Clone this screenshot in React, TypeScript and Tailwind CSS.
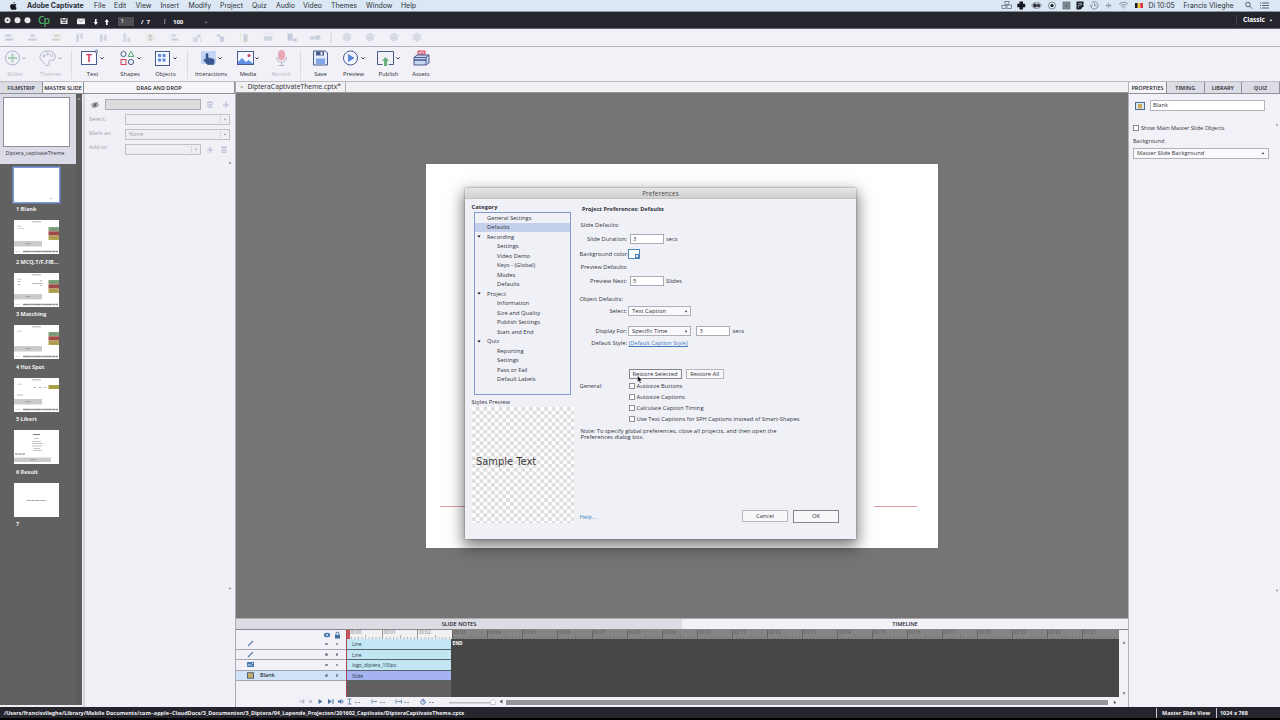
import type { ReactNode } from "react";

const menus = [
  ["File", "w-[20px]"],
  ["Edit", "w-[21.5px]"],
  ["View", "w-[25px]"],
  ["Insert", "w-[28px]"],
  ["Modify", "w-[31.5px]"],
  ["Project", "w-[32px]"],
  ["Quiz", "w-[24px]"],
  ["Audio", "w-[27px]"],
  ["Video", "w-[28px]"],
  ["Themes", "w-[35px]"],
  ["Window", "w-[35px]"],
  ["Help", "w-[30px]"],
];

const tree = [
  { label: "General Settings", level: 0 },
  { label: "Defaults", level: 0, active: true },
  { label: "Recording", level: 0, open: true },
  { label: "Settings", level: 1 },
  { label: "Video Demo", level: 1 },
  { label: "Keys - (Global)", level: 1 },
  { label: "Modes", level: 1 },
  { label: "Defaults", level: 1 },
  { label: "Project", level: 0, open: true },
  { label: "Information", level: 1 },
  { label: "Size and Quality", level: 1 },
  { label: "Publish Settings", level: 1 },
  { label: "Start and End", level: 1 },
  { label: "Quiz", level: 0, open: true },
  { label: "Reporting", level: 1 },
  { label: "Settings", level: 1 },
  { label: "Pass or Fail", level: 1 },
  { label: "Default Labels", level: 1 },
];

const slides = ["1 Blank", "2 MCQ,T/F,FIB...", "3 Matching", "4 Hot Spot", "5 Likert", "6 Result", "7"];

const seconds = Array.from({ length: 22 }, (_, i) => `00:${String(i).padStart(2, "0")}`);

function Caret({ className = "" }: { className?: string }) {
  return (
    <svg width="4" height="3" viewBox="0 0 4 3" className={`shrink-0 ${className}`}>
      <path d="M0 0h4L2 3z" fill="currentColor" />
    </svg>
  );
}

function AppleLogo() {
  return (
    <svg width="7" height="8" viewBox="0 0 14 16" fill="#10141c">
      <path d="M9.7 0C9.8 1.7 8.4 3.4 6.8 3.4 6.6 1.7 8.2 0.2 9.7 0zM12.9 5.4C11.7 6.1 11.1 7 11.1 8.3c0 1.6 1 2.7 2.4 3.2-.6 1.8-2 4.2-3.5 4.2-1 0-1.5-.6-2.7-.6s-1.7.6-2.7.6C2.4 15.7.3 12 .3 8.8.3 5.9 2.2 4.1 4.2 4.1c1.2 0 2.2.8 3 .8.7 0 1.9-.9 3.3-.9 1 0 1.9.5 2.4 1.4z" />
    </svg>
  );
}

function TrayIcons() {
  return (
    <svg width="145" height="12" viewBox="0 0 145 12" fill="none" stroke="#4b5460" strokeWidth="0.6">
      <rect x="4" y="1.5" width="4" height="3" />
      <rect x="1" y="5.5" width="4" height="3" />
      <rect x="6" y="5" width="4.5" height="3.5" />
      <path d="M18.500 1.500h3.500v2.200h2.200v3.600h-2.200v2.200h-3.500v-2.200h-2.200v-3.600h2.200z" fill="#14181f" stroke="none" />
      <ellipse cx="35.5" cy="5.5" rx="4.5" ry="2.8" />
      <circle cx="34" cy="5.5" r="1.8" fill="#222" />
      <circle cx="37.5" cy="5.5" r="1.5" fill="#222" />
      <circle cx="51" cy="5.5" r="3.5" />
      <circle cx="51" cy="5.5" r="1.6" fill="#14181f" stroke="none" />
      <rect x="62" y="2" width="7" height="7" fill="#8b939e" />
      <path d="M64 3.5v4M65.5 3.5v4M67 3.5v4" />
      <path d="M75.5 1.5h7v5l-3 3h-4z" fill="#1d222b" stroke="none" />
      <path d="M77.5 3.5h3v1.5h-3v2.5M81 7.5h2" stroke="#dbe7f3" />
      <path d="M90.5 3a3.7 3.7 0 1 1-.8 3M93.5 3v2.7h2M89.3 4.5l.8 1.8 1.600-1.200" />
      <path d="M104.5 5.5h6M106 4v3M109 4v3M107.5 2.5v6" stroke="#7c8590" />
      <path d="M118 4.3a6 6 0 0 1 9 0M119.5 5.9a4 4 0 0 1 6 0M121 7.4a2 2 0 0 1 3 0M122.5 8.7v.4" />
      <path d="M134 3h2.7v5H134z" fill="#1b1b1b" stroke="none" />
      <path d="M136.7 3h2.6v5h-2.6z" fill="#f2c834" stroke="none" />
      <path d="M139.3 3h2.7v5h-2.7z" fill="#d9333f" stroke="none" />
    </svg>
  );
}

function MenuBar() {
  return (
    <div className="flex h-[12px] items-center border-b border-[#8b9299] bg-[#dbe7f3] pl-[10px] font-['Inter',sans-serif] text-[6.9px] leading-[11px] text-[#2b3038]">
      <div className="w-[17px]">
        <AppleLogo />
      </div>
      <span className="w-[67px] text-[7px] font-bold tracking-[-0.03px]">Adobe Captivate</span>
      {menus.map(([label, width]) => (
        <span key={label} className={`shrink-0 ${width}`}>
          {label}
        </span>
      ))}
      <div className="ml-auto flex items-center pr-[10px]">
        <TrayIcons />
        <span className="ml-[3px] w-[35px]">Di 10:05</span>
        <span className="w-[60.5px]">Francis Vlieghe</span>
        <svg width="26" height="9" viewBox="0 0 26 9" fill="none" stroke="#39414d" strokeWidth="0.8">
          <circle cx="4" cy="3.5" r="2.3" />
          <path d="M5.7 5.2 8 7.700M16 2h1M18 2h7M16 4.500h1M18 4.500h7M16 7h1M18 7h7" />
        </svg>
      </div>
    </div>
  );
}

function TitleBar() {
  return (
    <div className="flex h-[17px] items-center border-b border-[#66656d] bg-[#25252d] font-['Open_Sans',sans-serif] text-[6px] font-bold text-white">
      <svg width="112" height="16" viewBox="0 0 112 16" className="shrink-0">
        <g fill="#e6e6e8">
          <circle cx="7.5" cy="8.3" r="3" />
          <circle cx="17.5" cy="8.3" r="3" />
          <circle cx="27.5" cy="8.3" r="3" />
        </g>
        <circle cx="7.5" cy="8.3" r="1" fill="#4b4b50" />
        <text x="38" y="11.5" fill="#4fa661" fontSize="10.5" fontWeight="600" fontFamily="Open Sans" textLength="12">
          Cp
        </text>
        <path d="M60.5 6h7v6h-7z" fill="#e2e2e5" />
        <path d="M62 6.200v2h4v-2M62.500 10.200h3.500" stroke="#25252d" fill="none" />
        <path d="M77 6.5h8v5.7h-8z" fill="#f0f0f2" />
        <path d="M77 6.700l4 3 4-3" stroke="#777" strokeWidth=".7" fill="none" />
        <path d="M95 7h1.6v3H98l-2.2 3-2.200-3H95zM106 13h1.600v-3h1.400l-2.200-3-2.200 3h1.400z" fill="#fff" />
      </svg>
      <div className="mt-[3px] ml-[5.5px] h-[9px] w-[16.5px] bg-[#4e4e53] pl-[3px] leading-[9px] font-normal">1</div>
      <span className="mt-[4px] ml-[7px] w-[22px] whitespace-pre">/  7</span>
      <span className="mt-[3px] w-[10px] font-normal">|</span>
      <span className="mt-[4px] w-[31px]">100</span>
      <Caret className="mt-[4px] scale-75 text-[#8d8d93]" />
      <div className="ml-auto flex h-[10px] items-center border-l border-[#414149] pl-[6px] text-[6.5px]">
        <span className="w-[26px]">Classic</span>
        <Caret className="mr-[7px] scale-75" />
      </div>
    </div>
  );
}

function AlignStrip() {
  const bars = [
    "M-4-4v8M-3-3h5v2h-5zM-3 1h7v2h-7z",
    "M-2-3h4v2h-4zM-4 1h8v2h-8z",
    "M4-4v8M-2-3h5v2h-5zM-4 1h7v2h-7z",
    "M-4-4h8M-3-3h2v7h-2zM1-3h2v4h-2z",
    "M-3-3h2v7h-2zM1-2h2v5h-2z",
    "M-3-4h2v8h-2zM1 0h2v4h-2zM-4 4h8",
    "M-4-4v8M4-4v8M-2-3h4v3h-4zM-2 1h4v2h-4z",
    "M-4-4v8M-2-3h4v2h-4zM-2 1h6v2h-6z",
    "M-4 0h4v4h-4zM0-3h3v3h-3zM3 2h1v2h-1z",
    "M-4-3h3v2h-3zM-1-1h4v5h-4z",
    "M-4-4v8M-1-3h4v7h-4z",
    "M-4-4h8M-4-1h8v4h-8z",
    "M-4-4h5v7h-5zM2 1h3v3h-3z",
    "M-5-1h4v3h-4zM0-2h5v4h-5z",
  ];
  return (
    <div className="h-[18px] border-b border-[#b5b5bd] bg-[#f1f1f7]">
      <svg width="440" height="17" viewBox="0 0 440 17">
        {bars.map((d, i) => (
          <path
            key={i}
            d={d}
            transform={`translate(${9 + i * 23.55} 8.5)`}
            fill={i % 3 === 0 ? "#c3cbdc" : i % 3 === 1 ? "#c9cfdf" : "#cdd6dc"}
            stroke={i % 4 === 2 ? "#dfe3c4" : "#d5dbe6"}
            strokeWidth=".6"
          />
        ))}
        <path d="M331 4v10" stroke="#cfcfd8" />
        {[347, 370, 394, 417].map((x) => (
          <g key={x} transform={`translate(${x} 8)`} fill="#d8dce6" stroke="#c9cfda" strokeWidth=".5">
            <path d="M-4.500 1.500 0-1 4.500 1.500 0 4.500z" />
            <path d="M-4.500-1.500 0-4 4.500-1.500 0 1.500z" />
          </g>
        ))}
      </svg>
    </div>
  );
}

function ToolButton({
  label,
  width,
  disabled,
  menu = true,
  children,
}: {
  label: string;
  width: string;
  disabled?: boolean;
  menu?: boolean;
  children: ReactNode;
}) {
  return (
    <div className={`flex shrink-0 flex-col items-center pt-[2px] ${width} ${disabled ? "text-[#b9b9c4]" : "text-[#2c2c34]"}`}>
      <div className={`flex h-[18px] items-center gap-[1.5px] ${disabled ? "opacity-40" : ""}`}>
        <svg width="17" height="18" viewBox="0 0 17 18" fill="none" stroke="#4a5a8c" strokeWidth="1">
          {children}
        </svg>
        {menu && (
          <svg width="4" height="3" viewBox="0 0 4 3" fill="none" stroke="#3a3f52" strokeWidth="1">
            <path d="M.4.4 2 2 3.600.4" />
          </svg>
        )}
      </div>
      <span className="mt-[4px] text-[5.8px] leading-[7px] font-medium">{label}</span>
    </div>
  );
}

function ToolSep() {
  return <div className="mt-[3px] h-[29px] w-px shrink-0 bg-[#dcdce4]" />;
}

function Toolbar() {
  return (
    <div className="flex h-[35px] border-b border-[#bcbcc2] bg-[#f1f1f7] font-['Open_Sans',sans-serif]">
      <ToolButton label="Slides" width="w-[30px]" disabled>
        <circle cx="8.5" cy="9" r="7" />
        <path d="M8.5 4.500v9M4 9h9" stroke="#3b9a63" strokeWidth="1.8" />
      </ToolButton>
      <ToolButton label="Themes" width="w-[41px]" disabled>
        <path d="M3 12C-1 9 1 3 7 2c6-1 10 3 9 7s-5 1-6 3 2 4-1 4.500S5 13 3 12z" />
        <circle cx="5" cy="7" r="1" />
        <circle cx="8.5" cy="5" r="1" />
        <circle cx="12.5" cy="6.5" r="1" />
      </ToolButton>
      <ToolSep />
      <div className="w-[2px]" />
      <ToolButton label="Text" width="w-[37px]">
        <rect x=".5" y="2.5" width="15" height="13" fill="#fafaff" />
        <text x="4.900" y="13" fontSize="10.5" fontWeight="700" fontFamily="Open Sans" fill="#d6405f" stroke="none">
          T
        </text>
        <circle cx="15.5" cy="2.5" r="1.2" fill="#f1f1f7" />
      </ToolButton>
      <ToolButton label="Shapes" width="w-[38px]">
        <circle cx="4.5" cy="5" r="2.6" />
        <path d="M12 2.3 14.9 7.4H9.1z" stroke="#4aa665" />
        <rect x="2" y="10.5" width="5" height="5" stroke="#d6405f" />
        <circle cx="12" cy="13" r="2.6" />
      </ToolButton>
      <ToolButton label="Objects" width="w-[33px]">
        <rect x="1.5" y="2.5" width="14" height="14" fill="#f8f9ff" />
        <path d="M4 5h3v3H4zM8.500 5h3v3h-3zM4 9.500h3v3H4zM8.500 9.500h3v3h-3z" fill="#5b8be0" stroke="none" />
      </ToolButton>
      <div className="w-[5px]" />
      <ToolSep />
      <div className="w-[3px]" />
      <ToolButton label="Interactions" width="w-[40px]">
        <rect x="1" y="2" width="15" height="13" fill="#c3d6f5" stroke="none" />
        <path
          d="M6 5.500c0-1.300 2-1.300 2 0V9l5 .9c1 .2 1.300 1 1.200 2l-.5 3.600H7.500L4 11.500c-.6-1 .6-1.700 1.300-1l.7.6z"
          fill="#3d5793"
          stroke="#34497e"
          strokeWidth=".6"
        />
      </ToolButton>
      <ToolButton label="Media" width="w-[34px]">
        <rect x=".5" y="2.5" width="16" height="13" fill="#f3f7ff" />
        <path d="M1 15v-2l4-4 4 4 2.500-2L16 14.500v.5z" fill="#5f90e3" stroke="none" />
        <circle cx="12" cy="6.5" r="1.5" fill="#d6405f" stroke="none" />
      </ToolButton>
      <ToolButton label="Record" width="w-[32px]" disabled menu={false}>
        <rect x="5.5" y="1.5" width="6" height="9.5" rx="3" fill="#e0405a" stroke="#d6405f" />
        <path d="M3.500 8c0 7 10 7 10 0M8.500 13.500v3M5.500 16.500h6" />
      </ToolButton>
      <div className="w-[3px]" />
      <ToolSep />
      <div className="w-[3px]" />
      <ToolButton label="Save" width="w-[33px]" menu={false}>
        <path d="M1.500 2h12L15.500 4v12h-14z" fill="#e4ebfa" />
        <path d="M4 2.500h8v4H4z" fill="#4a5a8c" stroke="none" />
        <path d="M8.500 3.200h2v2.500h-2z" fill="#fff" stroke="none" />
        <path d="M4 9.500h9v5.500H4z" fill="#83a6e8" stroke="none" />
      </ToolButton>
      <ToolButton label="Preview" width="w-[33px]">
        <circle cx="8.5" cy="9" r="7" fill="#f4f7ff" />
        <path d="M6.3 5.300 12 9l-5.700 3.700z" fill="#5585de" stroke="#4a6fc4" strokeWidth=".5" />
      </ToolButton>
      <ToolButton label="Publish" width="w-[37px]">
        <path d="M5.500 15.500H.5v-13h16v13h-5" />
        <path d="M8.500 8 12 12h-2v5H7v-5H5z" fill="#68b07c" stroke="none" />
      </ToolButton>
      <ToolButton label="Assets" width="w-[28px]" menu={false}>
        <path d="M5 2h7v6H5z" fill="#e8b4c0" stroke="#d6405f" />
        <path d="M7 6l2-2 2 2" stroke="#d6405f" />
        <path d="M1 8.500 4 6h12v8l-3 2H1z" fill="#c7d7f5" />
        <path d="M1 8.500h12V16M13 8.500 16 6" />
        <path d="M1 11h12" strokeWidth="1.5" />
      </ToolButton>
    </div>
  );
}

function PanelTab({ label, width, active }: { label: string; width: string; active?: boolean }) {
  return (
    <div
      className={`flex h-[12px] shrink-0 items-center justify-center border-r border-b border-[#8f8f96] pt-px text-[5.5px] font-semibold whitespace-nowrap text-[#22222a] ${width} ${active ? "bg-[#f5f5f8]" : "bg-[#dcdce5]"}`}
    >
      {label}
    </div>
  );
}

function ThumbArt({ index }: { index: number }) {
  if (index === 0)
    return (
      <svg width="45" height="34" viewBox="0 0 45 34">
        <path d="M36 30.500h2" stroke="#a9c9b0" />
      </svg>
    );
  if (index === 6)
    return (
      <svg width="45" height="34" viewBox="0 0 45 34">
        <path d="M13 17.500h19" stroke="#9d9d9d" strokeDasharray="2 .5" />
      </svg>
    );
  if (index === 5)
    return (
      <svg width="45" height="34" viewBox="0 0 45 34">
        <path d="M19 4.500h7" stroke="#777" />
        <path d="M20 8.500h5M18 11.500h9M18 13.500h11M18 16h10M20 18.500h6M19 20.500h9" stroke="#aaa" strokeWidth=".7" />
        <path d="M1 24h10" stroke="#777" strokeDasharray="3 .6" />
        <path d="M0 27.500h37v4.500H0z" fill="#cbcbcb" />
        <path d="M16 29.700h6" stroke="#888" strokeWidth=".7" />
      </svg>
    );
  return (
    <svg width="45" height="34" viewBox="0 0 45 34">
      <path d="M18 1.800h9" stroke="#999" strokeWidth=".8" />
      <path d="M3.500 6.200h4" stroke="#aaa" strokeWidth=".7" />
      {index === 1 && <path d="M4 8.500h6" stroke="#bbb" strokeWidth=".7" />}
      {index === 2 && <path d="M3.500 8.500h3M3.500 11.500h3M18 10.500h10M26 7.500h2M26 12.500h2" stroke="#aaa" strokeWidth=".8" />}
      {index === 4 ? (
        <>
          <path d="M19 9.500h3M24.500 9.500h3M30 9.500h2M3 17h6" stroke="#aaa" strokeWidth=".8" />
          <path d="M34.500 7H45v4H34.500z" fill="#aaa149" />
        </>
      ) : (
        <>
          <path d="M34.500 7H45v4.300H34.500z" fill="#7fa37a" />
          <path d="M34.500 11.300H45v4.300H34.500z" fill="#a54a47" />
          <path d="M34.500 15.600H45v4.400H34.500z" fill="#b3a552" />
          <path d="M36 9.500h7M36 13.500h7M36 17.800h7" stroke="#555" strokeWidth=".5" opacity=".5" />
        </>
      )}
      <path d="M0 21h28v5.500H0z" fill="#cbcbcb" />
      <path d="M11.500 23.700h5" stroke="#888" strokeWidth=".7" />
      <path d="M9 31.500h35" stroke="#8d8d8d" strokeWidth="1.3" strokeDasharray="7 .5 3 .4" />
      <path d="M1.500 31.500h4" stroke="#ccc" strokeWidth=".7" />
    </svg>
  );
}

function Filmstrip() {
  return (
    <div className="flex w-[84px] shrink-0 flex-col border-r border-[#d9d9e2]">
      <div className="flex">
        <PanelTab label="FILMSTRIP" width="w-[43px]" />
        <PanelTab label="MASTER SLIDE" width="w-[41px]" active />
      </div>
      <div className="flex flex-1 border-r border-b-2 border-[#eeeef3] bg-[#616161]">
        <div className="w-[76px]">
          <div className="h-[70px] bg-[#dcdce8] pt-[3px] pl-[3px]">
            <div className="h-[50px] w-[67px] border border-[#8e8e96] bg-white" />
            <div className="mt-[2px] w-[64px] text-center text-[5.2px] leading-[8px] whitespace-nowrap text-[#33333b]">Diptera_captivateTheme</div>
          </div>
          <div className="flex flex-col pt-[3.5px] pl-[14px]">
            {slides.map((name, i) => (
              <div key={name} className="h-[52.5px]">
                <div className={`h-[34px] w-[45px] bg-white ${i === 0 ? "ring-[1.5px] ring-[#7e97de]" : ""}`}>
                  <ThumbArt index={i} />
                </div>
                <div className="mt-[3.5px] pl-[2px] text-[5.5px] leading-[8px] font-bold whitespace-nowrap text-[#f2f2f2]">{name}</div>
              </div>
            ))}
          </div>
        </div>
        <div className="w-[6px] bg-[#5c5c5c] pt-[3px]">
          <Caret className="mx-auto rotate-180 text-[#8b8b8b]" />
        </div>
      </div>
    </div>
  );
}

function TrashIcon() {
  return (
    <svg width="6" height="7" viewBox="0 0 6 7" fill="none" stroke="#b7bfd6" strokeWidth=".9">
      <path d="M0 1.500h6M2 .5h2M1 2v4.500h4V2M2.300 3v2.500M3.700 3v2.500" />
    </svg>
  );
}

function PlusIcon() {
  return (
    <svg width="6" height="6" viewBox="0 0 6 6" stroke="#aeb8d4" strokeWidth="1">
      <path d="M3 0v6M0 3h6" />
    </svg>
  );
}

function DisabledSelect({ width, value }: { width: string; value?: string }) {
  return (
    <div className={`flex h-[11px] items-center border border-[#c0c0c8] bg-[#eeeef3] pl-[3px] ${width}`}>
      {value}
      <div className="ml-auto flex h-[7px] w-[9px] items-center justify-center border-l border-[#d5d5dc]">
        <Caret className="scale-75 text-[#a4a4ac]" />
      </div>
    </div>
  );
}

function DragDropPanel() {
  return (
    <div className="flex w-[152px] shrink-0 flex-col border-r border-[#a9a9b0]">
      <PanelTab label="DRAG AND DROP" width="w-[151px]" active />
      <div className="flex flex-1 flex-col border-l border-[#d0d0d8] pr-[5px] pl-[4px] text-[5.7px] text-[#a2a2ab]">
        <div className="mt-[5px] flex h-[11px] items-center">
          <svg width="8" height="8" viewBox="0 0 8 8" fill="none" stroke="#65656e" strokeWidth=".8" className="ml-[2px]">
            <path d="M.5 4c1.500-2.700 5.500-2.700 7 0-1.500 2.700-5.500 2.700-7 0zM1.500 7 6.500 1" />
            <circle cx="4" cy="4" r="1.3" fill="#65656e" />
          </svg>
          <div className="ml-[6px] h-[11px] w-[96px] border border-[#acacb2] bg-[#dcdcdd]" />
          <div className="ml-[6px]">
            <TrashIcon />
          </div>
          <div className="ml-[10px]">
            <PlusIcon />
          </div>
        </div>
        <div className="mt-[4px] flex h-[11px] items-center">
          <span className="w-[36px] pb-px">Select:</span>
          <DisabledSelect width="w-[105px]" />
        </div>
        <div className="mt-[4px] flex h-[11px] items-center">
          <span className="w-[36px] pb-[3px]">Mark as:</span>
          <DisabledSelect width="w-[105px]" value="None" />
        </div>
        <div className="mt-[4px] flex h-[11px] items-center">
          <span className="w-[36px] pb-[5px]">Add to:</span>
          <DisabledSelect width="w-[76px]" />
          <div className="ml-[6px]">
            <PlusIcon />
          </div>
          <div className="ml-[8px]">
            <TrashIcon />
          </div>
        </div>
        <Caret className="mt-[6px] mr-[-2px] ml-auto scale-75 rotate-180 text-[#777]" />
        <Caret className="mt-auto mr-[-2px] mb-[117px] ml-auto scale-75 text-[#777]" />
      </div>
    </div>
  );
}

function PrefRow({ label, gap, children }: { label?: string; gap: string; children?: ReactNode }) {
  return (
    <div className={`flex h-[10px] items-center ${gap}`}>
      <span className="w-[47.5px] shrink-0 text-right whitespace-nowrap">{label}</span>
      {children}
    </div>
  );
}

function NumberField({ value }: { value: string }) {
  return <div className="h-[10px] w-[34px] shrink-0 border border-[#ababb3] bg-white pl-[2.5px] leading-[8px]">{value}</div>;
}

function PrefSelect({ value }: { value: string }) {
  return (
    <div className="ml-[1px] flex h-[9.5px] w-[63px] shrink-0 items-center border border-[#b0b0b8] bg-[#f9f9fc] pr-[2px] pl-[3px]">
      {value}
      <Caret className="ml-auto scale-75 text-[#3b3b43]" />
    </div>
  );
}

function CheckOption({ label, section }: { label: string; section?: string }) {
  return (
    <div className="mt-px flex h-[10px] items-center">
      <span className="w-[49px] shrink-0">{section}</span>
      <div className="h-[6px] w-[6px] border border-[#8e8e96] bg-white" />
      <span className="ml-[2px] whitespace-nowrap">{label}</span>
    </div>
  );
}

function PreferencesDialog() {
  return (
    <div className="absolute top-[95px] left-[229px] flex h-[351px] w-[391px] flex-col bg-[#f0f1f7] text-[5.82px] leading-[8px] text-[#33333b] shadow-[0_6px_14px_2px_rgba(0,0,0,0.5),0_0_2px_rgba(0,0,0,0.4)]">
      <div className="flex h-[11px] shrink-0 items-center justify-center rounded-t-[2px] border-b border-[#c4c4c4] bg-gradient-to-b from-[#e6e6e6] to-[#d0d0d0] pt-px text-[6.4px] tracking-[0.1px] text-[#4b4b4b]">
        Preferences
      </div>
      <div className="flex flex-1">
        <div className="w-[114.5px] pl-[6.5px]">
          <div className="mt-[4px] font-bold">Category</div>
          <div className="mt-px ml-[2px] h-[183px] w-[97px] border border-[#7f9bd0]">
            {tree.map((row, i) => (
              <div key={i} className={`flex h-[9.5px] items-center ${row.active ? "bg-[#c3cfeb]" : ""}`}>
                <div className="w-[12.5px] pl-[2px]">{row.open && <Caret className="scale-90 text-[#1b1b22]" />}</div>
                <span className={row.level ? "pl-[10px]" : ""}>{row.label}</span>
              </div>
            ))}
          </div>
          <div className="mt-[3px] h-[8px]">Styles Preview</div>
          <div className="mt-px flex h-[116px] w-[102px] items-center bg-white bg-[conic-gradient(#dddddf_25%,#fff_0_50%,#dddddf_0_75%,#fff_0)] bg-[length:7.6px_7.6px] pb-[7px] pl-[4.5px] font-['DejaVu_Sans',sans-serif] text-[9.9px] text-[#3a3a3a]">
            Sample Text
          </div>
        </div>
        <div className="relative w-[260px]">
          <div className="mt-[5px] h-[10px] pl-[2.5px] text-[5.65px] leading-[10px] font-bold">Project Preferences: Defaults</div>
          <div className="mt-[6px] h-[10px] pl-px leading-[10px]">Slide Defaults:</div>
          <PrefRow label="Slide Duration:" gap="mt-[4px]">
            <div className="w-[2.5px]" />
            <NumberField value="3" />
            <span className="ml-[2.5px]">secs</span>
          </PrefRow>
          <PrefRow label="Background color:" gap="mt-[5px]">
            <div className="ml-[1px] flex h-[9.5px] w-[12px] items-end justify-end border border-[#4e86ba] bg-white">
              <div className="h-[4px] w-[4px] border border-[#4e86ba] bg-[#dfeaf5]" />
            </div>
          </PrefRow>
          <div className="mt-[3px] h-[10px] pl-px leading-[10px]">Preview Defaults:</div>
          <PrefRow label="Preview Next:" gap="mt-[4px]">
            <div className="w-[2.5px]" />
            <NumberField value="5" />
            <span className="ml-[2.5px]">Slides</span>
          </PrefRow>
          <div className="mt-[8px] h-[10px] leading-[10px]">Object Defaults:</div>
          <PrefRow label="Select:" gap="mt-[2px]">
            <PrefSelect value="Text Caption" />
          </PrefRow>
          <PrefRow label="Display For:" gap="mt-[10px]">
            <PrefSelect value="Specific Time" />
            <div className="w-[5px]" />
            <NumberField value="3" />
            <span className="ml-[2.5px]">secs</span>
          </PrefRow>
          <PrefRow label="Default Style:" gap="mt-[2px]">
            <span className="ml-[1.5px] text-[5.7px] text-[#3f78bd] underline decoration-[0.5px] underline-offset-1">[Default Caption Style]</span>
          </PrefRow>
          <PrefRow gap="mt-[21px]">
            <div className="ml-[1.5px] flex h-[10px] w-[53px] items-center justify-center border border-[#85858c] bg-[#f8f8fb]">Restore Selected</div>
            <div className="ml-[4.5px] flex h-[10px] w-[37.5px] items-center justify-center border border-[#b6b6be] bg-[#f8f8fb]">Restore All</div>
          </PrefRow>
          <div className="h-px" />
          <CheckOption section="General:" label="Autosize Buttons" />
          <CheckOption label="Autosize Captions" />
          <CheckOption label="Calculate Caption Timing" />
          <CheckOption label="Use Text Captions for SFH Captions instead of Smart-Shapes" />
          <div className="mt-[3.5px] pl-px leading-[6.5px] whitespace-nowrap">
            Note: To specify global preferences, close all projects, and then open the
            <br />
            Preferences dialog box.
          </div>
          <div className="mt-[69px] flex items-center">
            <span className="w-[162.5px] pt-[1px] text-[#4481b8]">Help...</span>
            <div className="flex h-[12px] w-[46px] items-center justify-center border border-[#b6b6be] bg-[#f8f8fb]">Cancel</div>
            <div className="ml-[5px] flex h-[13px] w-[46px] items-center justify-center border border-[#85858c] bg-[#f8f8fb]">OK</div>
          </div>
          <svg width="6" height="9" viewBox="0 0 6 9" className="absolute top-[175.5px] left-[57px]">
            <path d="M.5.5v6.500l1.500-1.300 1 2.500 1.100-.5-1-2.300h2z" fill="#111" stroke="#fff" strokeWidth=".4" />
          </svg>
        </div>
      </div>
    </div>
  );
}

function Stage() {
  return (
    <div className="relative flex h-[525px] shrink-0 bg-[#757575] pt-[70.5px] pl-[190px]">
      <div className="flex h-[384px] w-[512px] justify-between bg-white pt-[342px] pr-[21px] pl-[14px]">
        <div className="h-px w-[43px] bg-[#dc9a9d]" />
        <div className="h-px w-[43px] bg-[#dc9a9d]" />
      </div>
      <PreferencesDialog />
    </div>
  );
}

function TimelineRow({ icon, label, active }: { icon: ReactNode; label?: string; active?: boolean }) {
  return (
    <div className={`flex h-[10.5px] items-center border-b border-[#a6a6ae] pl-[11px] ${active ? "bg-[#cfe2f7]" : "bg-[#f1f1f7]"}`}>
      <svg width="7" height="7" viewBox="0 0 7 7">
        {icon}
      </svg>
      <span className="ml-[6px] w-[65px] text-[5.7px]">{label}</span>
      <div className="h-[2.5px] w-[2.5px] rounded-full bg-[#7b8290]" />
      <div className="ml-[8px] h-[2.5px] w-[2.5px] rounded-full bg-[#7b8290]" />
    </div>
  );
}

function TimelineClip({ label, slide }: { label: string; slide?: boolean }) {
  return (
    <div className={`h-[10.5px] w-[104px] border-b border-[#57646b] pl-[5px] text-[4.9px] leading-[10px] text-[#2b3a44] ${slide ? "bg-[#a5b4f0]" : "bg-[#c3e6f4]"}`}>
      {label}
    </div>
  );
}

function Timeline() {
  const line = <path d="M1 6 6 1" stroke="#5b7ba6" strokeWidth="1.1" />;
  return (
    <div className="flex flex-1 flex-col bg-[#f1f1f7]">
      <div className="flex h-[12px] border-t border-[#aaaab0]">
        <div className="flex w-[446px] items-center justify-center border-b border-[#88888f] bg-[#dcdce5] text-[5.6px] font-semibold text-[#22222a]">SLIDE NOTES</div>
        <div className="flex flex-1 items-center justify-center border-b border-[#88888f] text-[5.6px] font-semibold text-[#22222a]">TIMELINE</div>
      </div>
      <div className="flex h-[67px]">
        <div className="w-[110px]">
          <div className="flex h-[9px] items-center pl-[86.5px]">
            <svg width="18" height="8" viewBox="0 0 18 8">
              <ellipse cx="4" cy="4" rx="3.2" ry="2.3" fill="#4879ae" />
              <circle cx="4" cy="4" r="1" fill="#dbe7f3" />
              <path d="M12 4h5v3.500h-5z" fill="#3f6ea3" />
              <path d="M13 4V2.500c0-1.800 3-1.800 3 0V4" fill="none" stroke="#3f6ea3" />
            </svg>
          </div>
          <TimelineRow icon={line} />
          <TimelineRow icon={line} />
          <TimelineRow
            icon={
              <g>
                <path d="M0 1h7v5H0z" fill="#4a7bb0" />
                <path d="M.7 5 2.500 3l2 2M5 2.500h1" stroke="#fff" fill="none" strokeWidth=".8" />
              </g>
            }
          />
          <TimelineRow
            active
            label="Blank"
            icon={<rect x=".5" y=".7" width="6" height="5.5" fill="#c9ac63" stroke="#50637e" />}
          />
        </div>
        <div className="flex w-[773px] flex-col border-l border-[#a54b4e] bg-[#474747]">
          <div className="relative flex h-[9px] overflow-hidden bg-[#858585] text-[4.8px] leading-[5px]">
            {seconds.map((s, i) => (
              <div
                key={s}
                className={`h-[9px] shrink-0 border-l ${i < 3 ? "border-[#999] bg-[#f1f1f4] text-[#777]" : "border-[#636363] text-[#5b5b5b]"} ${i === 0 ? "w-[34.6px]" : "w-[35px]"}`}
              >
                <div className="pl-px">{s}</div>
                <svg width="34" height="4" viewBox="0 0 34 4" stroke={i < 3 ? "#8d8d8d" : "#686868"} strokeWidth=".6">
                  <path d="M3.500 2v2M7 2v2M10.500 2v2M14 2v2M17.500 0v4M21 2v2M24.500 2v2M28 2v2M31.500 2v2" />
                </svg>
              </div>
            ))}
            <div className="absolute top-0 left-0 h-[9px] w-[3px] bg-[#c9555a]" />
          </div>
          <div className="flex flex-1 items-start">
            <div className="h-full w-[104px] bg-[#606060]">
              <TimelineClip label="Line" />
              <TimelineClip label="Line" />
              <TimelineClip label="logo_diptera_100px" />
              <TimelineClip label="Slide" slide />
            </div>
            <span className="mt-px ml-[1.5px] text-[4.8px] leading-[6px] font-bold text-white">END</span>
          </div>
        </div>
        <div className="flex w-[9px] flex-col items-center justify-between pt-[11px] pb-[2px] text-[#777]">
          <Caret className="scale-90 rotate-180" />
          <Caret className="scale-90" />
        </div>
      </div>
      <div className="flex flex-1 items-center">
        <svg width="270" height="10" viewBox="0 0 270 10" className="shrink-0" fill="#49719f">
          <path d="M64 2.500v4M65 4.500 68 2.500v4z" stroke="#b7bdc9" strokeWidth=".6" fill="#b7bdc9" />
          <path d="M73 3h3v3h-3z" fill="#c4c8d2" />
          <path d="M82.500 2 86.500 4.500l-4 2.500zM92 2l4 2.500-4 2.500zM96.500 2h1v5h-1zM102 3.500h1.500l2-1.500v5l-2-1.500H102zM106.500 3h.8v3h-.8z" />
          <g stroke="#49719f" strokeWidth=".8" fill="none">
            <path d="M111.500 2h4M113.500 2.500v4M111.500 7h4M136 2.500v4M137 4.500h4M160 2.500v4M165.500 2.500v4M161 4.500h4" />
            <circle cx="187" cy="5" r="2.3" />
            <path d="M187 1.500v3.500h1.500" />
            <path d="M119 5.500h2M122 5.500h2M144 5.500h2M147 5.500h2M168 5.500h2M171 5.500h2M193 5.500h2M196 5.500h2" stroke="#777f8c" />
          </g>
          <path d="M213 5h43v1.500h-43z" fill="#b9b9c0" />
          <path d="M254.500 7.500v-3L257 2l2.500 2.500v3z" fill="#fff" stroke="#98989f" strokeWidth=".5" />
          <path d="M266.500 2.500v4L263.500 4.500z" fill="#555" />
        </svg>
        <div className="h-[5px] w-[602px] bg-[#959598]" />
        <Caret className="ml-[5px] scale-90 -rotate-90 text-[#555]" />
      </div>
    </div>
  );
}

function Properties() {
  return (
    <div className="flex w-[152px] shrink-0 flex-col border-l border-[#b1b1b8] bg-[#f1f1f7] text-[5.8px] text-[#33333b]">
      <div className="flex">
        <PanelTab label="PROPERTIES" width="w-[38px]" active />
        <PanelTab label="TIMING" width="w-[37.5px]" />
        <PanelTab label="LIBRARY" width="w-[37.5px]" />
        <PanelTab label="QUIZ" width="w-[38px]" />
      </div>
      <div className="mt-[6px] flex items-center pl-[6px]">
        <svg width="10" height="8" viewBox="0 0 10 8">
          <rect x=".5" y=".5" width="9" height="7" fill="#dbe9f7" stroke="#4a6e97" />
          <rect x="3" y="2" width="4" height="4.5" fill="#cdab58" />
        </svg>
        <div className="ml-[5px] h-[11px] w-[115px] border border-[#b6b6be] bg-white pl-[2px] leading-[9px]">Blank</div>
      </div>
      <div className="mt-[13px] flex h-[8px] items-center pl-[4px]">
        <div className="h-[6px] w-[6px] border border-[#88888f] bg-white" />
        <span className="ml-[2px] text-[5.6px] whitespace-nowrap">Show Main Master Slide Objects</span>
        <Caret className="mr-[1px] mb-[8px] ml-auto scale-75 rotate-180 text-[#888]" />
      </div>
      <div className="mt-[4.5px] pl-[4px] text-[5.6px] leading-[8px]">Background</div>
      <div className="mt-[3.5px] ml-[4px] flex h-[11px] w-[136px] items-center border border-[#b0b0b8] bg-[#fafafd] px-[3px]">
        Master Slide Background
        <Caret className="ml-auto scale-75" />
      </div>
      <Caret className="mt-auto mr-[1px] mb-[115px] ml-auto scale-75 text-[#888]" />
    </div>
  );
}

export default function App() {
  return (
    <div className="flex h-[720px] w-[1280px] flex-col overflow-hidden bg-black font-['Open_Sans',sans-serif]">
      <MenuBar />
      <TitleBar />
      <AlignStrip />
      <Toolbar />
      <div className="flex h-[625px] shrink-0 bg-[#f0f0f6]">
        <Filmstrip />
        <DragDropPanel />
        <div className="flex w-[892px] shrink-0 flex-col">
          <div className="flex h-[11px] shrink-0 border-b border-[#98989c] bg-[#f1f1f4]">
            <div className="flex w-[110px] items-center border-r border-[#b0b0b5] pl-[4px] text-[6.75px] whitespace-nowrap text-[#2d2d35]">
              <span className="mr-[4px] text-[6px] text-[#777]">×</span>
              DipteraCaptivateTheme.cptx*
            </div>
          </div>
          <Stage />
          <Timeline />
        </div>
        <Properties />
      </div>
      <div className="flex h-[11px] shrink-0 items-center bg-[#25252d] pt-px pl-[4px] text-[5.46px] font-bold whitespace-nowrap text-[#f0f0f2]">
        <span>/Users/francisvlieghe/Library/Mobile Documents/com~apple~CloudDocs/3_Documenten/3_Diptera/04_Lopende_Projecten/201602_Captivate/DipteraCaptivateTheme.cptx</span>
        <span className="ml-auto flex h-[10px] w-[60px] items-center border-l border-[#c7c7cc] pl-[5px]">Master Slide View</span>
        <span className="flex h-[10px] w-[64px] items-center border-l border-[#c7c7cc] pl-[3px]">1024 x 768</span>
      </div>
    </div>
  );
}
